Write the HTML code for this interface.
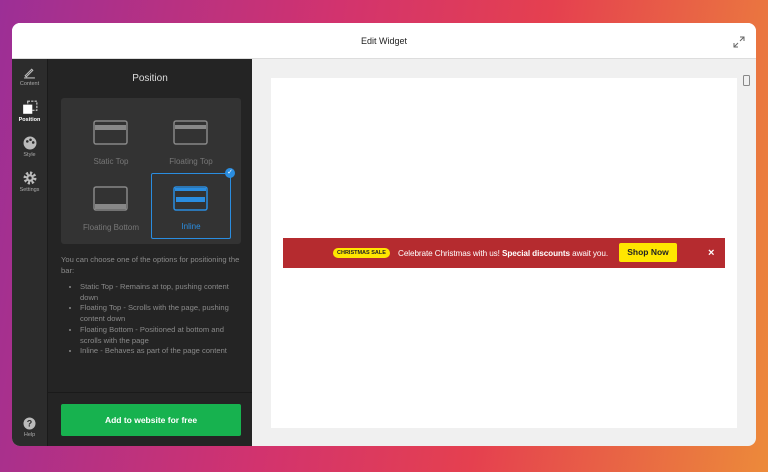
<!DOCTYPE html>
<html><head><style>
*{margin:0;padding:0;box-sizing:border-box}
body{width:768px;height:472px;overflow:hidden;font-family:"Liberation Sans",sans-serif;background:linear-gradient(100deg,#9c2f96 0%,#d2336e 40%,#e5404f 65%,#ec8a3a 100%);position:relative}
.win{position:absolute;left:12px;top:23px;width:744px;height:423px;background:#f0f0f0;border-radius:8px;overflow:hidden}
.hdr{height:36px;background:#fff;border-bottom:1px solid #ddd;text-align:center;font-size:9px;line-height:37px;color:#222;position:relative}
.side{position:absolute;left:0;top:36px;width:35px;bottom:0;background:#2c2c2c}
.side .it{position:absolute;left:0;width:35px;text-align:center;font-size:5.5px;color:#aaa}
.panel{position:absolute;left:35px;top:36px;width:205px;bottom:0;background:#242424;border-left:1px solid #1a1a1a}
.grid{position:absolute;left:13px;top:39px;width:180px;height:146px;background:#333;border-radius:3px}
.opt{position:absolute;width:80px;height:65px;text-align:center;font-size:8px;color:#777}
.opt svg{display:block;margin:0 auto}
.desc{position:absolute;left:13px;top:195px;width:182px;font-size:7.6px;line-height:11px;color:#8a8a8a}
.desc ul{margin-top:6px;padding-left:19px}
.desc li{line-height:10.7px}
.btn{position:absolute;left:13px;top:345px;width:180px;height:32px;background:#17b24f;border-radius:2px;color:#fff;font-size:8.5px;font-weight:bold;text-align:center;line-height:32px}
.canvas{position:absolute;left:259px;top:55px;width:466px;height:350px;background:#fff}
.banner{position:absolute;left:12px;top:160px;width:442px;height:30px;background:#b52b2f;color:#fff;font-size:8.8px}
</style></head><body>
<div class="win">
<div class="hdr">Edit Widget
<svg style="position:absolute;right:11px;top:13px" width="12" height="12" viewBox="0 0 12 12" fill="none" stroke="#666" stroke-width="1"><path d="M7 1h4v4M11 1L7 5M5 11H1V7M1 11l4-4"/></svg></div>
<div class="side">
<div class="it" style="top:7px"><svg width="13" height="13" viewBox="0 0 12 12"><path d="M2 9l6-6 1 1-6 6z M1 11h10" stroke="#bbb" fill="none"/></svg><br>Content</div>
<div class="it" style="top:41px;color:#fff;font-weight:bold"><svg width="16" height="15" viewBox="0 0 14 13"><rect x="5" y="1" width="8" height="8" fill="none" stroke="#ccc" stroke-dasharray="2 1"/><rect x="1" y="4" width="8" height="8" fill="#fff"/></svg><br>Position</div>
<div class="it" style="top:77px"><svg width="14" height="14" viewBox="0 0 13 13"><circle cx="6.5" cy="6.5" r="6" fill="#bbb"/><circle cx="4" cy="5" r="1.2" fill="#2c2c2c"/><circle cx="7" cy="3.5" r="1.2" fill="#2c2c2c"/><circle cx="9.5" cy="6" r="1.2" fill="#2c2c2c"/></svg><br>Style</div>
<div class="it" style="top:112px"><svg width="14" height="14" viewBox="0 0 13 13"><circle cx="6.5" cy="6.5" r="4.5" fill="none" stroke="#bbb" stroke-width="3" stroke-dasharray="2 1.5"/><circle cx="6.5" cy="6.5" r="3.5" fill="#bbb"/><circle cx="6.5" cy="6.5" r="1.5" fill="#2c2c2c"/></svg><br>Settings</div>
<div class="it" style="top:358px"><svg width="13" height="13" viewBox="0 0 13 13"><circle cx="6.5" cy="6.5" r="6" fill="#bbb"/><text x="6.5" y="9.5" font-size="9" font-weight="bold" text-anchor="middle" fill="#2c2c2c" font-family="Liberation Sans">?</text></svg><br>Help</div>
</div>
<div class="panel">
<div style="text-align:center;color:#ddd;font-size:10px;margin-top:14px">Position</div>
<div class="grid">
<div class="opt" style="left:10px;top:22px"><svg width="36" height="26" viewBox="0 0 36 26"><rect x="1" y="1" width="33" height="23" rx="2" fill="#333" stroke="#888" stroke-width="1.5"/><rect x="2" y="5" width="31" height="5" fill="#888"/></svg><div style="margin-top:11px">Static Top</div></div>
<div class="opt" style="left:90px;top:22px"><svg width="36" height="26" viewBox="0 0 36 26"><rect x="1" y="1" width="33" height="23" rx="2" fill="#333" stroke="#888" stroke-width="1.5"/><rect x="2" y="5" width="31" height="4" fill="#888"/></svg><div style="margin-top:11px">Floating Top</div></div>
<div class="opt" style="left:10px;top:88px"><svg width="36" height="26" viewBox="0 0 36 26"><rect x="1" y="1" width="33" height="23" rx="2" fill="#333" stroke="#888" stroke-width="1.5"/><rect x="2" y="18" width="31" height="5" fill="#888"/></svg><div style="margin-top:11px">Floating Bottom</div></div>
<div class="opt" style="left:90px;top:75px;border:1.5px solid #2a8de0;height:66px;border-radius:2px;color:#2a8de0;padding-top:12px"><svg width="36" height="26" viewBox="0 0 36 26"><rect x="1" y="1" width="33" height="23" rx="2" fill="#333" stroke="#2a8de0" stroke-width="1.5"/><rect x="2" y="2" width="31" height="3" fill="#2a8de0"/><rect x="3" y="11" width="29" height="5" fill="#2a8de0"/></svg><div style="margin-top:10px">Inline</div>
<div style="position:absolute;right:-5px;top:-6px;width:10px;height:10px;border-radius:50%;background:#2a8de0;color:#fff;font-size:7px;line-height:10px">✓</div></div>
</div>
<div class="desc">You can choose one of the options for positioning the bar:
<ul><li>Static Top - Remains at top, pushing content down</li><li>Floating Top - Scrolls with the page, pushing content down</li><li>Floating Bottom - Positioned at bottom and scrolls with the page</li><li>Inline - Behaves as part of the page content</li></ul></div>
<div style="position:absolute;left:0;right:0;top:333px;border-top:1px solid #1a1a1a"></div>
<div class="btn">Add to website for free</div>
</div>
<svg style="position:absolute;left:731px;top:52px" width="7" height="11" viewBox="0 0 7 11"><rect x="0.5" y="0.5" width="6" height="10" rx="1" fill="none" stroke="#888"/></svg>
<div class="canvas">
<div class="banner">
<span style="position:absolute;left:50px;top:10px;background:#ffe600;color:#222;font-size:5.5px;font-weight:bold;border-radius:5px;padding:1px 4px;line-height:8px">CHRISTMAS SALE</span>
<span style="position:absolute;left:115px;top:10px;line-height:11px;font-size:8.2px;letter-spacing:-0.1px;white-space:nowrap">Celebrate Christmas with us! <b>Special discounts</b> await you.</span>
<span style="position:absolute;left:336px;top:5px;width:58px;height:19px;background:#ffe600;color:#222;font-weight:bold;border-radius:2px;text-align:center;line-height:19px;font-size:8.5px">Shop Now</span>
<span style="position:absolute;left:425px;top:8px;font-weight:bold;font-size:11px;line-height:14px">×</span>
</div></div>
</div>
</body></html>
